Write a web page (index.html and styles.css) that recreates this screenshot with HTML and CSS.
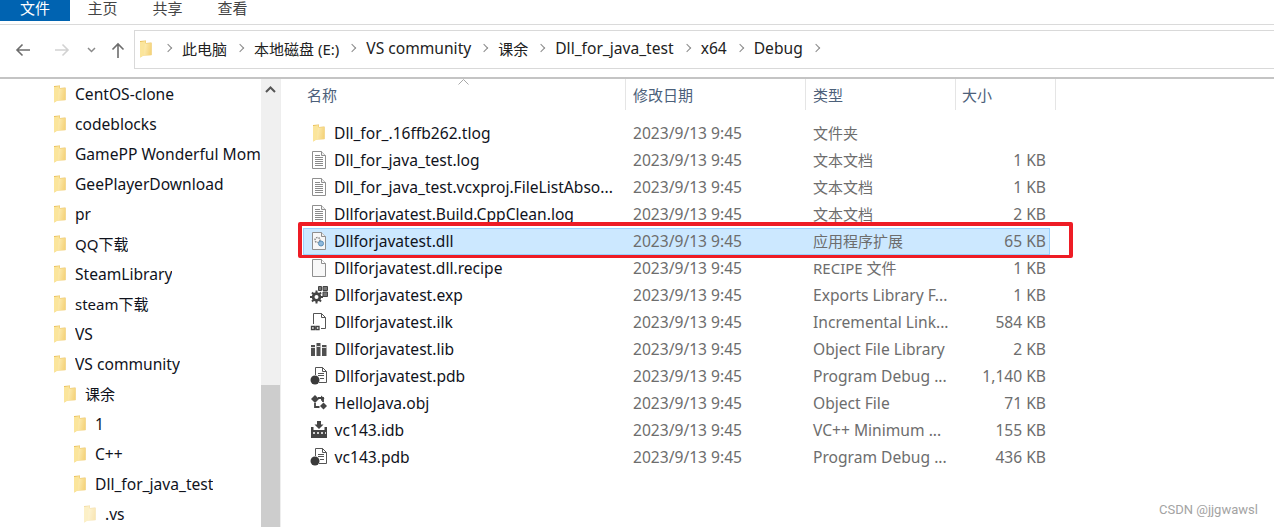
FILE: index.html
```html
<!DOCTYPE html>
<html lang="zh-CN">
<head>
<meta charset="utf-8">
<title>Debug</title>
<link rel="stylesheet" href="styles.css">
</head>
<body>
<svg class="defs" width="0" height="0" aria-hidden="true">
  <defs>
    <linearGradient id="fg" x1="0" y1="0" x2="1" y2="0.3">
      <stop offset="0" stop-color="#fdeeb8"/><stop offset="1" stop-color="#f5d47c"/>
    </linearGradient>
    <symbol id="folder" viewBox="0 0 13 18">
      <path d="M1 1 L7 0.5 V3 L12.500 2.500 V15 L4 15.500 L1 17.500 Z" fill="#e8bd58"/>
      <path d="M1 2 L6.500 1 L7 14.500 L1 17.500 Z" fill="#fbe59b"/>
      <path d="M6 3.500 L12.500 3 V15.200 L5 15.500 Z" fill="url(#fg)"/>
    </symbol>
    <symbol id="text" viewBox="0 0 14 18">
      <path d="M.5.500H9.500L13.500 4.500V17.500H.5Z" fill="#fff" stroke="#8f8f8f"/>
      <path d="M9.500.500V4.500H13.500" fill="#eee" stroke="#8f8f8f"/>
      <path d="M3 4.500H8M3 6.500H11M3 8.500H11M3 10.500H11M3 12.500H11M3 14.500H11" stroke="#8a8a8a"/>
    </symbol>
    <symbol id="dll" viewBox="0 0 14 18">
      <path d="M.5.500H9.500L13.500 4.500V17.500H.5Z" fill="#f7f7f7" stroke="#8f8f8f"/>
      <path d="M9.500.500V4.500H13.500" fill="#eee" stroke="#8f8f8f"/>
      <circle cx="5.500" cy="8" r="2.500" fill="none" stroke="#888" stroke-width="1.500" stroke-dasharray="1.500 1"/>
      <circle cx="9" cy="11.500" r="2.500" fill="#8fb9dc" stroke="#5b8fb9"/>
    </symbol>
    <symbol id="blank" viewBox="0 0 14 18">
      <path d="M.5.500H9.500L13.500 4.500V17.500H.5Z" fill="#f8f8f8" stroke="#8f8f8f"/>
      <path d="M9.500.500V4.500H13.500" fill="#fff" stroke="#8f8f8f"/>
    </symbol>
    <symbol id="exp" viewBox="0 0 18 18">
      <circle cx="6.500" cy="11" r="3.500" fill="none" stroke="#444" stroke-width="2.500"/>
      <path d="M6.500 4.500V17.500M0 11H13M2 6.500 11 15.500M11 6.500 2 15.500" stroke="#444" stroke-width="2"/>
      <circle cx="6.500" cy="11" r="2" fill="#fff"/>
      <path d="M8.500.5H11.500V4.500H8.500ZM13 .5H17.500V4.500H13ZM13 6H17.500V10.500H13Z" fill="#777" stroke="#444"/>
    </symbol>
    <symbol id="ilk" viewBox="0 0 18 18">
      <path d="M3.500 11V.5H11.500L15.500 4.500V15.500H11" fill="#fff" stroke="#555"/>
      <path d="M11.500.5V4.500H15.500" fill="none" stroke="#555"/>
      <path d="M1.500 13.500H4.500V16.500H1.500ZM6 13.500H9V16.500H6Z" fill="none" stroke="#444" stroke-width="1.300"/>
      <path d="M3.500 15H7" stroke="#444"/>
    </symbol>
    <symbol id="lib" viewBox="0 0 18 18">
      <path d="M1 5H5V16H1ZM6.500 3H10.500V16H6.500ZM12 5H16.500V16H12Z" fill="#505050"/>
      <path d="M1 7.500H5M6.500 6.500H10.500M12 7.500H16.500" stroke="#d8d8d8"/>
    </symbol>
    <symbol id="pdb" viewBox="0 0 18 18">
      <path d="M5.500 8V.5H12.500L16.500 4.500V15.500H9" fill="#fff" stroke="#555"/>
      <path d="M12.500.5V4.500H16.500" fill="none" stroke="#555"/>
      <path d="M8 6.500H14M8 8.500H14M10 11.500H14" stroke="#555"/>
      <circle cx="5" cy="13" r="4.500" fill="#3a3a3a"/>
    </symbol>
    <symbol id="obj" viewBox="0 0 18 18">
      <path d="M1 5 5 1 9 5 5 9Z" fill="#444"/>
      <path d="M10 12 13.500 8.500 17 12 13.500 15.500Z" fill="#444"/>
      <path d="M8 4H13V8M5 9V13H9.500" fill="none" stroke="#444" stroke-width="1.800"/>
      <path d="M11 1.500 14.500 4.500 11 7Z" fill="#444"/>
    </symbol>
    <symbol id="idb" viewBox="0 0 18 18">
      <path d="M7 0H11V3.500H13.500L9 8 4.500 3.500H7Z" fill="#444"/>
      <path d="M1 6H3.500V9H14.500V6H17V17H1Z" fill="#444"/>
      <path d="M3 12H5M7 12H9M11 12H13M15 12H16" stroke="#fff" stroke-width="1.500"/>
    </symbol>
  </defs>
</svg>

<div class="ribbon">
  <div class="tab tab-active">文件</div>
  <div class="tab">主页</div>
  <div class="tab">共享</div>
  <div class="tab">查看</div>
</div>

<div class="addressrow">
  <div class="navbtns">
    <svg class="navicon back" width="16" height="14" viewBox="0 0 16 14"><path d="M15 7H2M7.500 1.500 2 7l5.500 5.500" fill="none" stroke="#6d6d6d" stroke-width="1.600"/></svg>
    <svg class="navicon fwd" width="16" height="14" viewBox="0 0 16 14"><path d="M1 7H14M8.500 1.500 14 7l-5.500 5.500" fill="none" stroke="#d2d2d2" stroke-width="1.600"/></svg>
    <svg class="navicon down" width="9" height="6" viewBox="0 0 9 6"><path d="M1 1l3.500 3.500L8 1" fill="none" stroke="#8a8a8a" stroke-width="1.500"/></svg>
    <svg class="navicon up" width="14" height="16" viewBox="0 0 14 16"><path d="M7 16V2M1.500 7.500 7 2l5.500 5.500" fill="none" stroke="#6d6d6d" stroke-width="1.600"/></svg>
  </div>
  <div class="addressbox">
    <svg class="crumb-folder" width="13" height="18"><use href="#folder"/></svg>
    <span class="sep"></span><span class="crumb cjk">此电脑</span>
    <span class="sep"></span><span class="crumb cjk">本地磁盘 (E:)</span>
    <span class="sep"></span><span class="crumb">VS community</span>
    <span class="sep"></span><span class="crumb cjk">课余</span>
    <span class="sep"></span><span class="crumb">Dll_for_java_test</span>
    <span class="sep"></span><span class="crumb">x64</span>
    <span class="sep"></span><span class="crumb">Debug</span>
    <span class="sep"></span>
  </div>
</div>

<div class="main">
  <nav class="tree">
    <div class="tree-list">
      <div class="node"><svg class="ficon" width="13" height="18"><use href="#folder"/></svg><span class="label">CentOS-clone</span></div>
      <div class="node"><svg class="ficon" width="13" height="18"><use href="#folder"/></svg><span class="label">codeblocks</span></div>
      <div class="node"><svg class="ficon" width="13" height="18"><use href="#folder"/></svg><span class="label">GamePP Wonderful Moment</span></div>
      <div class="node"><svg class="ficon" width="13" height="18"><use href="#folder"/></svg><span class="label">GeePlayerDownload</span></div>
      <div class="node"><svg class="ficon" width="13" height="18"><use href="#folder"/></svg><span class="label">pr</span></div>
      <div class="node"><svg class="ficon" width="13" height="18"><use href="#folder"/></svg><span class="label cjk">QQ下载</span></div>
      <div class="node"><svg class="ficon" width="13" height="18"><use href="#folder"/></svg><span class="label">SteamLibrary</span></div>
      <div class="node"><svg class="ficon" width="13" height="18"><use href="#folder"/></svg><span class="label cjk">steam下载</span></div>
      <div class="node"><svg class="ficon" width="13" height="18"><use href="#folder"/></svg><span class="label">VS</span></div>
      <div class="node"><svg class="ficon" width="13" height="18"><use href="#folder"/></svg><span class="label">VS community</span></div>
      <div class="node lvl1"><svg class="ficon" width="13" height="18"><use href="#folder"/></svg><span class="label cjk">课余</span></div>
      <div class="node lvl2"><svg class="ficon" width="13" height="18"><use href="#folder"/></svg><span class="label">1</span></div>
      <div class="node lvl2"><svg class="ficon" width="13" height="18"><use href="#folder"/></svg><span class="label">C++</span></div>
      <div class="node lvl2"><svg class="ficon" width="13" height="18"><use href="#folder"/></svg><span class="label">Dll_for_java_test</span></div>
      <div class="node lvl3"><svg class="ficon faded" width="13" height="18"><use href="#folder"/></svg><span class="label">.vs</span></div>
    </div>
    <div class="scrollbar">
      <svg class="scroll-up" width="11" height="7" viewBox="0 0 11 7"><path d="M1 6l4.500-4.500L10 6" fill="none" stroke="#555" stroke-width="2"/></svg>
      <div class="scroll-thumb"></div>
    </div>
  </nav>

  <section class="files">
    <div class="thead">
      <div class="th c-name">名称<svg class="sort" width="11" height="6" viewBox="0 0 11 6"><path d="M.5 5.500 5.500.5l5 5" fill="none" stroke="#a8a8a8"/></svg></div>
      <div class="th c-date">修改日期</div>
      <div class="th c-type">类型</div>
      <div class="th c-size">大小</div>
    </div>
    <div class="tbody">
      <div class="row"><div class="c-name cell"><svg class="ico ico-f" width="13" height="18"><use href="#folder"/></svg><span class="fname">Dll_for_.16ffb262.tlog</span></div><div class="c-date cell">2023/9/13 9:45</div><div class="c-type cell cjk">文件夹</div><div class="c-size cell"></div></div>
      <div class="row"><div class="c-name cell"><svg class="ico" width="14" height="18"><use href="#text"/></svg><span class="fname">Dll_for_java_test.log</span></div><div class="c-date cell">2023/9/13 9:45</div><div class="c-type cell cjk">文本文档</div><div class="c-size cell">1 KB</div></div>
      <div class="row"><div class="c-name cell"><svg class="ico" width="14" height="18"><use href="#text"/></svg><span class="fname">Dll_for_java_test.vcxproj.FileListAbso...</span></div><div class="c-date cell">2023/9/13 9:45</div><div class="c-type cell cjk">文本文档</div><div class="c-size cell">1 KB</div></div>
      <div class="row"><div class="c-name cell"><svg class="ico" width="14" height="18"><use href="#text"/></svg><span class="fname">Dllforjavatest.Build.CppClean.log</span></div><div class="c-date cell">2023/9/13 9:45</div><div class="c-type cell cjk">文本文档</div><div class="c-size cell">2 KB</div></div>
      <div class="row selected"><div class="c-name cell"><svg class="ico" width="14" height="18"><use href="#dll"/></svg><span class="fname">Dllforjavatest.dll</span></div><div class="c-date cell">2023/9/13 9:45</div><div class="c-type cell cjk">应用程序扩展</div><div class="c-size cell">65 KB</div></div>
      <div class="row"><div class="c-name cell"><svg class="ico" width="14" height="18"><use href="#blank"/></svg><span class="fname">Dllforjavatest.dll.recipe</span></div><div class="c-date cell">2023/9/13 9:45</div><div class="c-type cell cjk">RECIPE 文件</div><div class="c-size cell">1 KB</div></div>
      <div class="row"><div class="c-name cell"><svg class="ico ico-w" width="18" height="18"><use href="#exp"/></svg><span class="fname">Dllforjavatest.exp</span></div><div class="c-date cell">2023/9/13 9:45</div><div class="c-type cell">Exports Library F...</div><div class="c-size cell">1 KB</div></div>
      <div class="row"><div class="c-name cell"><svg class="ico ico-w" width="18" height="18"><use href="#ilk"/></svg><span class="fname">Dllforjavatest.ilk</span></div><div class="c-date cell">2023/9/13 9:45</div><div class="c-type cell">Incremental Link...</div><div class="c-size cell">584 KB</div></div>
      <div class="row"><div class="c-name cell"><svg class="ico ico-w" width="18" height="18"><use href="#lib"/></svg><span class="fname">Dllforjavatest.lib</span></div><div class="c-date cell">2023/9/13 9:45</div><div class="c-type cell">Object File Library</div><div class="c-size cell">2 KB</div></div>
      <div class="row"><div class="c-name cell"><svg class="ico ico-w" width="18" height="18"><use href="#pdb"/></svg><span class="fname">Dllforjavatest.pdb</span></div><div class="c-date cell">2023/9/13 9:45</div><div class="c-type cell">Program Debug ...</div><div class="c-size cell">1,140 KB</div></div>
      <div class="row"><div class="c-name cell"><svg class="ico ico-w" width="18" height="18"><use href="#obj"/></svg><span class="fname">HelloJava.obj</span></div><div class="c-date cell">2023/9/13 9:45</div><div class="c-type cell">Object File</div><div class="c-size cell">71 KB</div></div>
      <div class="row"><div class="c-name cell"><svg class="ico ico-w" width="18" height="18"><use href="#idb"/></svg><span class="fname">vc143.idb</span></div><div class="c-date cell">2023/9/13 9:45</div><div class="c-type cell">VC++ Minimum ...</div><div class="c-size cell">155 KB</div></div>
      <div class="row"><div class="c-name cell"><svg class="ico ico-w" width="18" height="18"><use href="#pdb"/></svg><span class="fname">vc143.pdb</span></div><div class="c-date cell">2023/9/13 9:45</div><div class="c-type cell">Program Debug ...</div><div class="c-size cell">436 KB</div></div>
    </div>
  </section>
</div>

<div class="annotation"></div>
<div class="watermark">CSDN @jjgwawsl</div>
</body>
</html>
```

FILE: styles.css
```css
* { box-sizing: border-box; }
html, body { margin: 0; height: 527px; overflow: hidden; background: #fff; }
body {
  font-family: "Noto Sans", "Noto Sans CJK SC", sans-serif;
  font-size: 15.6px;
  color: #1a1a1a;
  position: relative;
}
.defs { position: absolute; }
.cjk { font-size: 15px; }

.ribbon {
  height: 25px;
  display: flex;
  border-bottom: 1px solid #dadada;
}
.tab {
  width: 65px;
  height: 21px;
  line-height: 16px;
  text-align: center;
  font-size: 15px;
  color: #444;
}
.tab-active { width: 70px; background: #0063b1; color: #fff; }

.addressrow {
  height: 54px;
  display: flex;
  padding-top: 5px;
  border-bottom: 2px solid #c4c4c4;
}
.navbtns {
  width: 134px;
  height: 39px;
  display: flex;
  align-items: center;
  padding-left: 15px;
}
.back { margin-right: 23px; }
.fwd { margin-right: 17px; }
.down { margin-right: 15px; }
.addressbox {
  width: 1140px;
  height: 39px;
  border: 1px solid #d9d9d9;
  border-right: 0;
  display: flex;
  align-items: center;
  padding-left: 4px;
  padding-bottom: 3px;
  white-space: nowrap;
  color: #222;
}
.crumb-folder { margin-right: 13px; margin-top: 2px; flex: none; }
.sep {
  width: 6px;
  height: 6px;
  border-top: 1.500px solid #8a8a8a;
  border-right: 1.500px solid #8a8a8a;
  transform: rotate(45deg);
  margin-right: 11px;
  flex: none;
}
.crumb { margin-right: 10px; }

.main { display: flex; height: 448px; }
.tree {
  width: 281px;
  flex: none;
  display: flex;
  border-right: 1px solid #eeeeee;
}
.tree-list { width: 261px; flex: none; overflow: hidden; }
.node {
  height: 30px;
  display: flex;
  align-items: center;
  padding-left: 53px;
  white-space: nowrap;
  color: #10131c;
}
.lvl1 { padding-left: 63px; }
.lvl2 { padding-left: 73px; }
.lvl3 { padding-left: 83px; }
.ficon { flex: none; margin-right: 9px; }
.faded { opacity: .55; }
.label { overflow: hidden; }
.label.cjk { margin-bottom: 2px; }

.scrollbar {
  width: 19px;
  flex: none;
  background: #f0f0f0;
  display: flex;
  flex-direction: column;
  align-items: center;
  padding-top: 7px;
}
.scroll-up { flex: none; }
.scroll-thumb {
  width: 19px;
  flex: none;
  height: 143px;
  margin-top: 292px;
  background: #cdcdcd;
}

.files { flex: 1; padding-left: 22px; }
.thead { display: flex; height: 31px; }
.th {
  color: #4c607a;
  font-size: 15px;
  border-right: 1px solid #e5e5e5;
  padding-top: 5px;
  position: relative;
}
.thead .c-name { padding-left: 4px; }
.sort { position: absolute; left: 155px; top: 0; }
.c-name { width: 323px; flex: none; }
.c-date { width: 180px; flex: none; padding-left: 7px; }
.c-type { width: 150px; flex: none; padding-left: 7px; }
.c-size { width: 100px; flex: none; padding-left: 6px; }

.tbody { padding-top: 10px; }
.row { display: flex; height: 27px; width: 747px; align-items: center; }
.row .c-size { width: 94px; padding: 0 4px 2px 0; text-align: right; }
.cell { color: #6d6d6d; white-space: nowrap; overflow: hidden; padding-bottom: 2px; }
.row .c-name { display: flex; align-items: center; padding-left: 7px; color: #10131c; }
.ico { flex: none; margin: 0 8px 0 2px; }
.ico-f { margin-right: 9px; }
.ico-w { margin: 0 6.600px 0 0; }
.selected { background: #cce8ff; box-shadow: inset 0 0 0 1px #99d1ff; }

.annotation {
  position: absolute;
  left: 298px;
  top: 222px;
  width: 775px;
  height: 36px;
  border: 4px solid #ee1c25;
  border-bottom-width: 3px;
  border-radius: 2px;
}
.watermark {
  position: absolute;
  left: 1159px;
  top: 502px;
  font-family: "Roboto", "Liberation Sans", sans-serif;
  font-size: 13px;
  color: #a3a3a3;
}
```
